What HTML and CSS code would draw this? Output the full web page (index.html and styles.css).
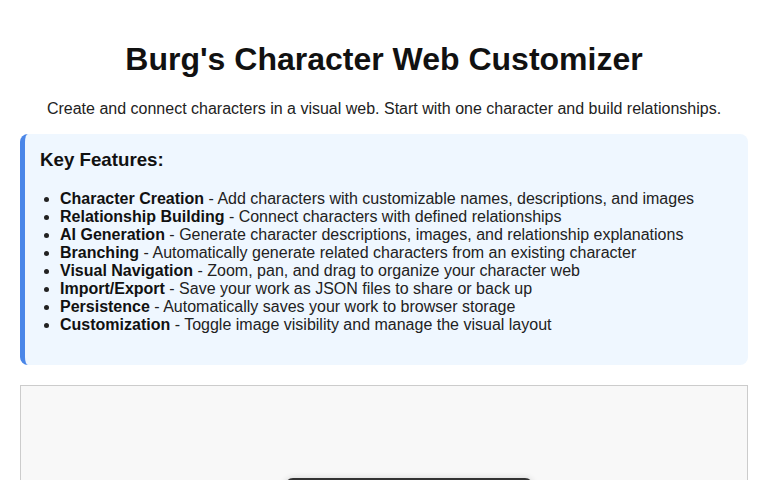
FILE: index.html
```html
<!DOCTYPE html>
<html>
<head>
<meta charset="utf-8">
<link rel="stylesheet" href="styles.css">
</head>
<body>
<h1 class="title">Burg's Character Web Customizer</h1>
<p class="intro">Create and connect characters in a visual web. Start with one character and build relationships.</p>
<div class="features">
  <h3 class="features-title">Key Features:</h3>
  <ul class="features-list">
    <li><strong>Character Creation</strong> - Add characters with customizable names, descriptions, and images</li>
    <li><strong>Relationship Building</strong> - Connect characters with defined relationships</li>
    <li><strong>AI Generation</strong> - Generate character descriptions, images, and relationship explanations</li>
    <li><strong>Branching</strong> - Automatically generate related characters from an existing character</li>
    <li><strong>Visual Navigation</strong> - Zoom, pan, and drag to organize your character web</li>
    <li><strong>Import/Export</strong> - Save your work as JSON files to share or back up</li>
    <li><strong>Persistence</strong> - Automatically saves your work to browser storage</li>
    <li><strong>Customization</strong> - Toggle image visibility and manage the visual layout</li>
  </ul>
</div>
<div class="canvas">
  <div class="node"></div>
</div>
</body>
</html>
```
FILE: styles.css
```css
html, body {
  margin: 0;
  padding: 0;
}
body {
  padding: 20px;
  font-family: "Liberation Sans", Arial, sans-serif;
  color: #222;
  background: #fff;
}
.title {
  font-size: 32px;
  text-align: center;
  margin: 21.44px 0;
  color: #111;
}
.intro {
  text-align: center;
  font-size: 16px;
  margin: 16px 0;
  color: #222;
}
.features {
  background: #eff7ff;
  border-left: 5px solid #4a86e8;
  border-radius: 8px;
  padding: 15px;
  margin: 0 0 20px 0;
}
.features-title {
  margin: 0 0 18.72px 0;
  font-size: 18.72px;
  color: #111;
}
.features-list {
  margin: 0 0 16px 0;
  padding-left: 20px;
  font-size: 16px;
  color: #222;
}
.features-list strong {
  color: #111;
}
.canvas {
  position: relative;
  height: 600px;
  border: 1px solid #ccc;
  background: #f8f8f8;
  overflow: hidden;
}
.node {
  position: absolute;
  left: 264px;
  top: 92px;
  width: 248px;
  height: 120px;
  background: #333;
  border-radius: 8px;
  box-shadow: 0 0 6px rgba(0,0,0,0.15);
}
```
